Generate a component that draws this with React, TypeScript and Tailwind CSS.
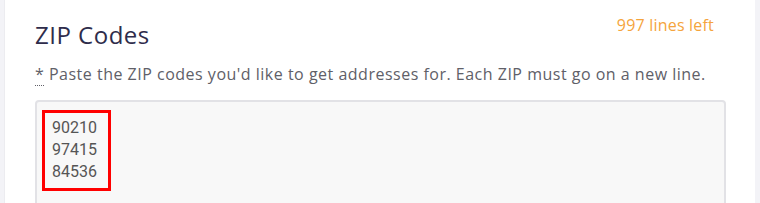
import React from 'react';

const ZIPS = ['90210', '97415', '84536'];

const App: React.FC = () => {
  return (
    <div className="flex h-[203px] w-[760px] overflow-hidden bg-[#f3f3f7] font-['Open_Sans',sans-serif]">
      <div className="ml-[4px] w-[751px] border-l border-[#ececf0] bg-white pl-[30px] pr-[29px] pt-[19px]">
        <div className="flex items-start justify-between">
          <h2 className="text-[24px] leading-[32px] tracking-[0.5px] text-[#2e2c4b]">ZIP Codes</h2>
          <span className="-mt-[4px] pr-[12px] text-[16px] leading-[20px] tracking-[0.2px] text-[#f5a43c]">997 lines left</span>
        </div>
        <p className="mt-[12px] text-[16px] leading-[22px] tracking-[0.5px] text-[#606068]">
          <abbr title="required" className="no-underline border-b border-dotted border-[#606068]">*</abbr> Paste the ZIP codes you'd like to get addresses for. Each ZIP must go on a new line.
        </p>
        <div className="relative mt-[15px] h-[120px] rounded-[4px] border-2 border-[#e2e2e6] bg-[#f8f8f8] pl-[15px] pt-[15px]">
          <div className="font-['Roboto',sans-serif] text-[16px] leading-[22px] text-[#555]">
            {ZIPS.map(z => (
              <div key={z}>{z}</div>
            ))}
          </div>
          <div className="absolute left-[5px] top-[8px] h-[81px] w-[69px] border-[3px] border-[#ff0000]" />
        </div>
      </div>
    </div>
  );
};

export default App;
